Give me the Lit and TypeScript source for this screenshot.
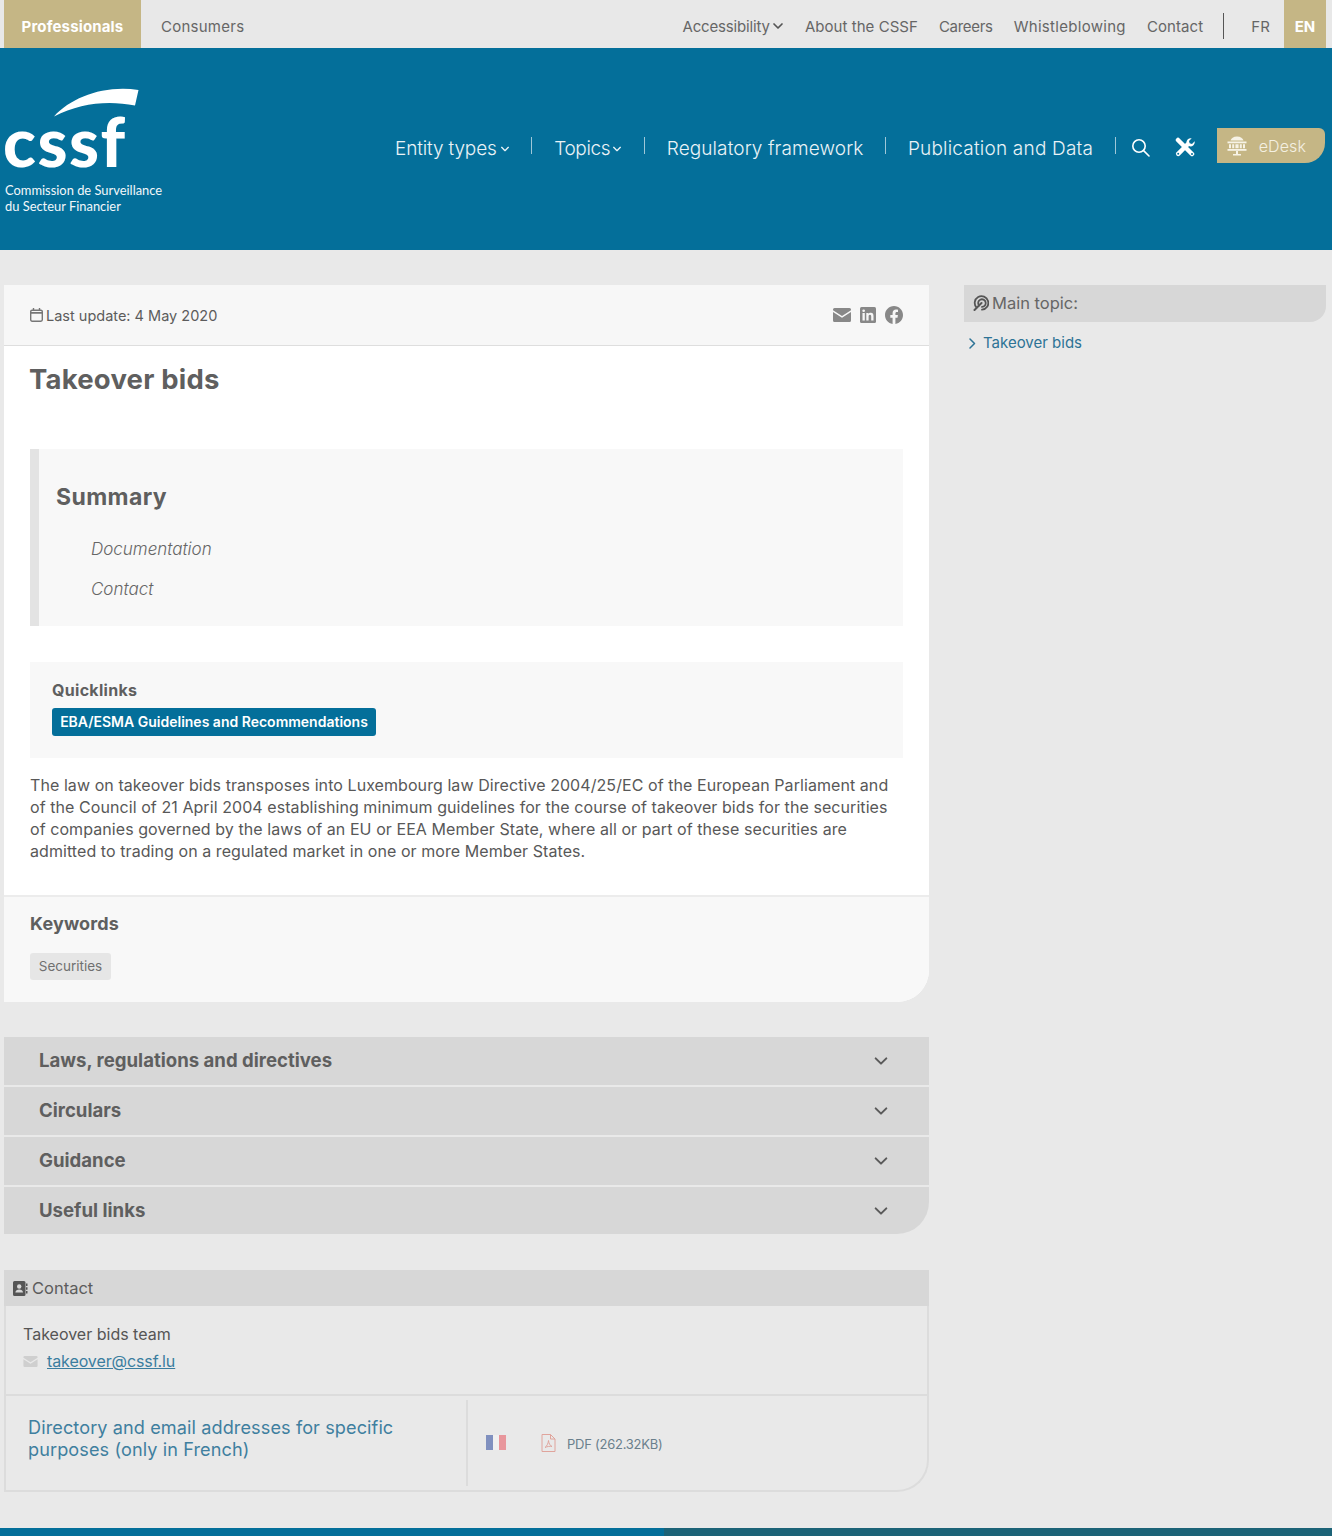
import { LitElement, html, css } from "lit";
import { customElement } from "lit/decorators.js";

const chevron = (size: number, w = 1.6) => html`<svg class="chev" width=${size} height=${size} viewBox="0 0 12 12" fill="none" stroke="currentColor" stroke-width=${w} stroke-linecap="round" stroke-linejoin="round"><path d="M2 4l4 4 4-4"/></svg>`;
const mail = (w: number, h: number, fill: string) => html`<svg width=${w} height=${h} viewBox="0 0 18 14" fill=${fill}><path d="M1.5 0h15A1.5 1.5 0 0 1 18 1.5v.7L9 8 0 2.2v-.7A1.5 1.5 0 0 1 1.5 0z"/><path d="M0 4l9 5.8L18 4v8.5a1.5 1.5 0 0 1-1.5 1.5h-15A1.5 1.5 0 0 1 0 12.5z"/></svg>`;
const sections = ["Laws, regulations and directives", "Circulars", "Guidance", "Useful links"];

@customElement("app-root")
export class AppRoot extends LitElement {
  static styles = css`
    :host { display: block; width: 1332px; background: #e9e9e9; font-family: Inter, "Open Sans", "Liberation Sans", sans-serif; color: #5c5c5c; }
    a { color: inherit; text-decoration: none; }
    svg { display: block; flex: none; }
    .top { height: 48px; display: flex; align-items: stretch; padding: 0 6px 0 4px; background: #e8e8e8; font-size: 15px; letter-spacing: .1px; color: #666; }
    .top-tab { display: flex; align-items: center; justify-content: center; padding-top: 4px; box-sizing: border-box; }
    .pro { width: 137px; background: #c5b685; color: #fff; font-weight: 700; font-size: 15px; letter-spacing: .15px; }
    .consumers { margin-left: 20px; letter-spacing: .25px; }
    .top-right { margin-left: auto; display: flex; align-items: stretch; gap: 21px; }
    .acc { gap: 2px; letter-spacing: -.15px; }
    .acc .chev { color: #555; }
    .about { letter-spacing: .05px; }
    .careers { letter-spacing: -.3px; }
    .whistle { letter-spacing: .3px; }
    .vr { width: 1px; margin: 13px 0 9px -1px; background: #555; }
    .fr { margin-left: 6px; }
    .en { width: 42px; margin-left: -7px; background: #c5b685; color: #fff; font-weight: 700; }
    .head { height: 202px; background: #046f9a; display: flex; align-items: flex-start; color: #eaf3f7; }
    .logo { position: relative; width: 395px; height: 202px; flex: none; font-family: Lato, "Open Sans", sans-serif; color: #fff; padding: 55px 0 0 3px; box-sizing: border-box; }
    .swoosh { position: absolute; left: 0; top: 0; }
    .cssf { font-size: 68px; line-height: 76px; font-weight: 900; letter-spacing: 1.5px; height: 80px; }
    .logo-sub { margin: 0 0 0 2px; font-size: 12.9px; line-height: 15.5px; font-weight: 400; color: #f2f7fa; }
    .main-nav { display: flex; align-items: center; padding-top: 80px; font-size: 19px; font-weight: 300; letter-spacing: .1px; }
    .nav-item { display: flex; align-items: center; gap: 3px; height: 40px; white-space: nowrap; }
    .entity { letter-spacing: -.15px; }
    .topics { letter-spacing: -.35px; gap: 2px; }
    .pub { letter-spacing: .2px; }
    .sep { width: 1px; height: 17px; margin: 0 22px 7px 21.5px; background: #9fc7d8; }
    .search { margin: 0 25px 3px -7px; }
    .tools { margin: 0 22px 3px 0; }
    .edesk { width: 108px; height: 35px; margin: 0 0 6px 0; background: #c5b685; border-radius: 0 6px 20px 0; display: flex; align-items: center; padding-left: 9px; box-sizing: border-box; gap: 11px; color: #f4f0e2; font-size: 16px; font-weight: 300; }
    .cols { display: flex; align-items: flex-start; padding: 35px 6px 0 4px; gap: 35px; }
    .left { width: 925px; flex: none; }
    .right { flex: 1; }
    .card { background: #fff; border-radius: 0 0 32px 0; overflow: hidden; }
    .card-top { height: 60px; background: #f7f7f7; border-bottom: 1px solid #dedede; display: flex; align-items: center; justify-content: space-between; padding: 0 26px; font-size: 14.5px; color: #5c5c5c; }
    .date, .share { display: flex; align-items: center; gap: 3px; }
    .share { gap: 9px; color: #888; }
    .card-body { padding: 0 26px 33px; }
    h1 { margin: 0 0 0 -1px; padding: 15px 0 52px; font-size: 27.5px; line-height: 36px; font-weight: 700; color: #5f5f5f; letter-spacing: .2px; }
    .summary { height: 177px; box-sizing: border-box; background: #f8f8f8; border-left: 9px solid #e3e3e3; padding: 33px 17px 0; }
    h2 { margin: 0; font-size: 23px; line-height: 30px; font-weight: 700; color: #5f5f5f; letter-spacing: .4px; }
    .sum-list { margin-top: 26px; padding-left: 35px; display: flex; flex-direction: column; gap: 18px; font-size: 17px; line-height: 22px; font-style: italic; color: #666; font-weight: 300; }
    .quick { margin-top: 36px; height: 96px; box-sizing: border-box; background: #f8f8f8; padding: 17px 22px 0; }
    .quick b { display: block; font-size: 16px; line-height: 22px; font-weight: 700; color: #5f5f5f; letter-spacing: .3px; }
    .btn { display: inline-block; margin-top: 7px; height: 28px; line-height: 28px; width: 324px; box-sizing: border-box; text-align: center; background: #046f9a; color: #fff; font-size: 14px; font-weight: 600; border-radius: 3px; white-space: nowrap; }
    .para { margin: 16px 0 0; font-size: 16px; line-height: 22px; color: #585858; letter-spacing: .07px; font-weight: 400; }
    .keys { background: #f8f8f8; height: 107px; box-sizing: border-box; border-top: 2px solid #ececec; padding: 15px 26px 0; }
    .keys b { display: block; font-size: 18px; line-height: 24px; font-weight: 700; color: #5f5f5f; letter-spacing: .15px; }
    .tag { display: inline-block; margin-top: 17px; height: 27px; line-height: 27px; width: 81px; text-align: center; background: #e6e6e6; border-radius: 3px; font-size: 13.5px; color: #707070; }
    .acc-list { margin-top: 35px; display: flex; flex-direction: column; gap: 2px; border-radius: 0 0 32px 0; overflow: hidden; }
    .acc-row { height: 48px; background: #d7d7d7; display: flex; align-items: center; justify-content: space-between; padding: 0 40px 0 35px; font-size: 18.6px; font-weight: 700; color: #5f5f5f; }
    .acc-row:last-child { height: 47px; }
    .acc-row span { padding-bottom: 2px; }
    .acc-row .chev { color: #5a5a5a; }
    .contact { margin-top: 36px; border: 2px solid #dcdcdc; border-top: 0; border-radius: 0 0 32px 0; height: 222px; box-sizing: border-box; }
    .contact-h { margin: 0 -2px; height: 36px; background: #d7d7d7; display: flex; align-items: center; gap: 4px; padding-left: 9px; font-size: 16.5px; color: #5c5c5c; }
    .contact-b { height: 90px; box-sizing: border-box; border-bottom: 2px solid #dcdcdc; padding: 15px 0 0 17px; font-size: 16px; line-height: 27px; color: #555; }
    .mail-line { display: flex; align-items: center; gap: 9px; }
    .mail-line a { color: #3a7d9f; text-decoration: underline; letter-spacing: -.1px; }
    .doc { display: flex; height: 94px; }
    .doc-l { width: 462px; flex: none; box-sizing: border-box; margin: 4px 0; padding: 16px 0 0 22px; border-right: 2px solid #dcdcdc; font-size: 18.1px; line-height: 22px; color: #3f7f9f; letter-spacing: .1px; }
    .doc-r { display: flex; align-items: center; padding: 2px 0 0 18px; font-size: 13px; color: #6a7f8c; letter-spacing: -.25px; }
    .flag { display: flex; width: 20px; height: 15px; margin: 0 35px 3px 0; }
    .flag i { flex: 1; }
    .pdf { margin: 0 11px 3px 0; }
    .topic { height: 37px; box-sizing: border-box; padding: 0 0 2px 9px; background: #d7d7d7; border-radius: 0 0 16px 0; display: flex; align-items: center; gap: 3px; font-size: 16.5px; color: #666; }
    .topic-link { margin: 11px 0 0 4px; display: flex; align-items: center; gap: 7px; font-size: 15px; line-height: 20px; color: #2d7396; }
    .foot { margin-top: 36px; height: 8px; display: flex; }
    .foot i { display: block; }
    .foot .a { width: 664px; background: #046f9a; }
    .foot .b { flex: 1; background: #1c6377; }
  `;

  render() {
    return html`
      <div class="top">
        <a class="top-tab pro">Professionals</a>
        <a class="top-tab consumers">Consumers</a>
        <div class="top-right">
          <a class="top-tab acc">Accessibility ${chevron(12, 1.7)}</a>
          <a class="top-tab about">About the CSSF</a>
          <a class="top-tab careers">Careers</a>
          <a class="top-tab whistle">Whistleblowing</a>
          <a class="top-tab">Contact</a>
          <span class="vr"></span>
          <a class="top-tab fr">FR</a>
          <a class="top-tab en">EN</a>
        </div>
      </div>

      <header class="head">
        <div class="logo">
          <svg class="swoosh" width="160" height="130" viewBox="0 48 160 130" fill="#fff"><path d="M54 116.500C72 97 104 85 138.500 90L135 105.500C108 100 80 103 54 116.500z"/></svg>
          <div class="cssf">cssf</div>
          <div class="logo-sub">Commission de Surveillance<br />du Secteur Financier</div>
        </div>
        <nav class="main-nav">
          <a class="nav-item entity">Entity types ${chevron(10, 1.6)}</a>
          <span class="sep"></span>
          <a class="nav-item topics">Topics ${chevron(10, 1.6)}</a>
          <span class="sep"></span>
          <a class="nav-item">Regulatory framework</a>
          <span class="sep"></span>
          <a class="nav-item pub">Publication and Data</a>
          <span class="sep"></span>
          <svg class="search" width="19" height="19" viewBox="0 0 19 19" fill="none" stroke="#fff" stroke-width="1.6" stroke-linecap="round"><circle cx="8" cy="8" r="6.2"/><path d="M12.6 12.6L18 18"/></svg>
          <svg class="tools" width="20" height="20" viewBox="0 0 20 20"><path fill="none" stroke="#fff" stroke-width="4.500" stroke-linecap="round" d="M3.200 16.800L12 8"/><path fill="none" stroke="#fff" stroke-width="4.500" stroke-linecap="round" d="M3 3l14 14"/><path fill="#fff" d="M11.500 6.500c-.6-2.800 1.700-5.700 5.200-5.200l-2.700 2.700.6 2.300 2.400.6 2.700-2.700c.5 3.400-2.400 5.800-5.300 5.100z"/><circle cx="3.200" cy="16.800" r="1" fill="#046f9a"/><circle cx="17" cy="17" r="1" fill="#046f9a"/></svg>
          <a class="edesk">
            <svg width="22" height="22" viewBox="0 0 22 22" fill="#f7f3e6"><path d="M11 1.500C7.500 1.500 5 3.300 4.500 5.500h13C17 3.300 14.500 1.500 11 1.500z"/><rect x="1.500" y="6.500" width="19" height="1.800"/><path d="M3 9.200h2v4H3zM6.200 9.200h2v4h-2zM9.400 9.200h3.200v4H9.400zM13.800 9.200h2v4h-2zM17 9.200h2v4h-2z"/><rect x="1.500" y="14" width="19" height="1.800"/><path d="M10 16h2v3h3v1.500H7V19h3z"/></svg>
            eDesk
          </a>
        </nav>
      </header>

      <div class="cols">
        <main class="left">
          <section class="card">
            <div class="card-top">
              <span class="date">
                <svg width="13" height="14" viewBox="0 0 13 14" fill="none" stroke="#777" stroke-width="1.400"><rect x=".7" y="2.200" width="11.600" height="11" rx="1.400"/><path d="M.7 4.800h11.600" stroke-width="1.800"/><path d="M3.500 0v3M9.500 0v3"/></svg>
                Last update: 4 May 2020
              </span>
              <span class="share">
                ${mail(18, 14, "#888")}
                <svg width="16" height="16" viewBox="0 0 16 16"><rect width="16" height="16" rx="1.500" fill="#888"/><path fill="#f7f7f7" d="M2.500 6h2.300v7.500H2.500zM3.650 2.400a1.300 1.300 0 1 1 0 2.700 1.300 1.300 0 0 1 0-2.700zM6.300 6h2.200v1c.4-.7 1.200-1.200 2.300-1.200 2.300 0 2.700 1.500 2.700 3.500v4.200h-2.300V9.800c0-.9 0-2-1.200-2s-1.400 1-1.400 1.900v3.800H6.300z"/></svg>
                <svg width="18" height="18" viewBox="0 0 18 18"><path fill="#888" d="M18 9.050C18 4.050 13.970 0 9 0S0 4.050 0 9.050c0 4.520 3.290 8.260 7.590 8.950v-6.330H5.310V9.050h2.280V7.060c0-2.270 1.340-3.520 3.400-3.520.99 0 2.020.18 2.020.18v2.220h-1.130c-1.120 0-1.470.7-1.470 1.410v1.700h2.490l-.4 2.620h-2.090V18C14.710 17.310 18 13.570 18 9.050z"/></svg>
              </span>
            </div>
            <div class="card-body">
              <h1>Takeover bids</h1>
              <div class="summary">
                <h2>Summary</h2>
                <div class="sum-list"><a>Documentation</a><a>Contact</a></div>
              </div>
              <div class="quick">
                <b>Quicklinks</b>
                <a class="btn">EBA/ESMA Guidelines and Recommendations</a>
              </div>
              <p class="para">The law on takeover bids transposes into Luxembourg law Directive 2004/25/EC of the European Parliament and of the Council of 21 April 2004 establishing minimum guidelines for the course of takeover bids for the securities of companies governed by the laws of an EU or EEA Member State, where all or part of these securities are admitted to trading on a regulated market in one or more Member States.</p>
            </div>
            <div class="keys">
              <b>Keywords</b>
              <span class="tag">Securities</span>
            </div>
          </section>

          <section class="acc-list">
            ${sections.map((t) => html`<div class="acc-row"><span>${t}</span>${chevron(16, 1.5)}</div>`)}
          </section>

          <section class="contact">
            <div class="contact-h">
              <svg width="15" height="15" viewBox="0 0 15 15" fill="#555"><path d="M1.500 0h9.500a1.500 1.500 0 0 1 1.500 1.500v12A1.500 1.500 0 0 1 11 15H1.500A1.500 1.500 0 0 1 0 13.500v-12A1.500 1.500 0 0 1 1.500 0z"/><path d="M13 2.500h1.500v2.500H13zM13 6.200h1.500v2.500H13zM13 10h1.500v2.500H13z"/><circle cx="6.200" cy="5.500" r="2.200" fill="#d7d7d7"/><path fill="#d7d7d7" d="M2.400 11.500c0-2 1.800-3 3.800-3s3.800 1 3.800 3z"/></svg>
              Contact
            </div>
            <div class="contact-b">
              <div>Takeover bids team</div>
              <div class="mail-line">${mail(15, 11, "#cfcfcf")}<a>takeover@cssf.lu</a></div>
            </div>
            <div class="doc">
              <a class="doc-l">Directory and email addresses for specific purposes (only in French)</a>
              <div class="doc-r">
                <span class="flag"><i style="background:#8090bf"></i><i style="background:#f0f0f0"></i><i style="background:#e8969c"></i></span>
                <svg class="pdf" width="15" height="18" viewBox="0 0 15 18" fill="none" stroke="#e0a49c" stroke-width="1"><path d="M1 .5h8.500L14 5v12.500H1z"/><path d="M9.500.5V5H14"/><path d="M7.500 6.500c-.3 3 -1.500 5.500 -3.500 7 2-1 5-1.500 7-1-2-1-3.200-3-3.500-6z"/></svg>
                PDF (262.32KB)
              </div>
            </div>
          </section>
        </main>

        <aside class="right">
          <div class="topic">
            <svg width="16" height="16" viewBox="0 0 16 16" fill="none" stroke="#555" stroke-width="1.800" stroke-linecap="round"><path d="M3.500 12.500A6.800 6.800 0 1 1 9 14.700"/><path d="M6 10.500a3.800 3.800 0 1 1 3 1.400"/><path d="M8.500 8L1.500 15" stroke-width="2"/></svg>
            Main topic:
          </div>
          <a class="topic-link">
            <svg width="8" height="11" viewBox="0 0 8 11" fill="none" stroke="#2d7396" stroke-width="1.500" stroke-linecap="round" stroke-linejoin="round"><path d="M2 1l4.500 4.500L2 10"/></svg>
            Takeover bids
          </a>
        </aside>
      </div>
      <div class="foot"><i class="a"></i><i class="b"></i></div>
    `;
  }
}
